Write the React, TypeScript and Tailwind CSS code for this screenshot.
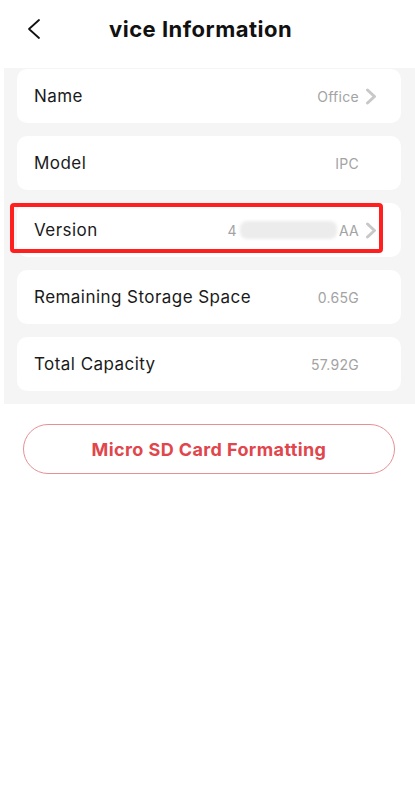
interface Row {
  label: string;
  value: string;
  arrow?: boolean;
  blurred?: boolean;
}

const rows: Row[] = [
  { label: 'Name', value: 'Office', arrow: true },
  { label: 'Model', value: 'IPC' },
  { label: 'Version', value: 'AA', arrow: true, blurred: true },
  { label: 'Remaining Storage Space', value: '0.65G' },
  { label: 'Total Capacity', value: '57.92G' },
];

const Arrow = () => (
  <svg className="absolute left-[348px] top-[19px]" width="13" height="17" viewBox="0 0 13 17" fill="none">
    <polyline points="2.5,2 9.5,8.5 2.5,15" stroke="#c8c8c8" strokeWidth="3" strokeLinecap="round" strokeLinejoin="round" />
  </svg>
);

const App = () => {
  return (
    <div className="min-h-[789px] w-[415px] bg-white font-['Inter',sans-serif] text-[#1a1a1a]">
      {/* Header */}
      <div className="relative flex h-[68px] items-start pt-[13px]">
        <svg className="absolute left-[26px] top-[18px]" width="16" height="22" viewBox="0 0 16 22" fill="none">
          <polyline points="13,2 3,11 13,20" stroke="#111" strokeWidth="1.8" strokeLinecap="round" strokeLinejoin="round" />
        </svg>
        <h1 className="ml-[109px] text-[22px] font-bold tracking-[0.5px] text-[#111]">vice Information</h1>
      </div>

      {/* Info list */}
      <div className="ml-[4px] flex flex-col gap-[13px] bg-[#f5f5f5] pb-[13px] pl-[13px] pr-[14px] pt-px">
        {rows.map((row) => (
          <div
            key={row.label}
            className="relative flex h-[54px] items-center rounded-[10px] bg-white pl-[17px] pr-[42px]"
          >
            <span className="pt-px text-[17px] tracking-[0.45px]">{row.label}</span>
            <div className="ml-auto flex items-center text-[14px] tracking-[0.3px] text-[#a3a3a3]">
              {row.blurred && (
                <>
                  <span>4</span>
                  <span className="ml-[3px] mr-[2px] h-[18px] w-[97px] rounded-[7px] bg-[#ececec] blur-[1.5px]" />
                </>
              )}
              <span>{row.value}</span>
            </div>
            {row.arrow && <Arrow />}
            {row.blurred && (
              <div className="absolute left-[-7px] top-0 h-[50px] w-[373px] rounded-[4px] border-[4px] border-[#ff1f1f]" />
            )}
          </div>
        ))}
      </div>

      {/* Format button */}
      <div className="px-[20px] pt-[20px]">
        <button className="ml-[3px] flex h-[50px] w-[372px] items-center justify-center rounded-full border border-[#e88f94] text-[18px] font-bold tracking-[0.4px] text-[#e0464c]">
          Micro SD Card Formatting
        </button>
      </div>
    </div>
  );
};

export default App;
